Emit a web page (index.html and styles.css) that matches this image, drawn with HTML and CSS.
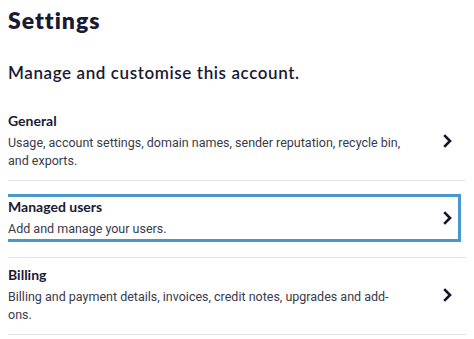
FILE: index.html
```html
<!DOCTYPE html>
<html>
<head>
    <title>Settings</title>
    <link rel="stylesheet" href="styles.css">
</head>
<body>
    <h1 class="page-title">Settings</h1>
    <h2 class="page-sub">Manage and customise this account.</h2>
    <section class="list">
        <a class="item" href="#general">
            <span class="text">
                <span class="name">General</span>
                <span class="desc">Usage, account settings, domain names, sender reputation, recycle bin, and exports.</span>
            </span>
            <span class="chev"><svg width="10" height="14" viewBox="0 0 10 14"><path d="M2.2 1.2 L8 7 L2.2 12.8" fill="none" stroke="#14142b" stroke-width="2.6"/></svg></span>
        </a>
        <a class="item focus" href="#users">
            <span class="ring">
                <span class="text">
                    <span class="name">Managed users</span>
                    <span class="desc">Add and manage your users.</span>
                </span>
                <span class="chev"><svg width="10" height="14" viewBox="0 0 10 14"><path d="M2.2 1.2 L8 7 L2.2 12.8" fill="none" stroke="#14142b" stroke-width="2.6"/></svg></span>
            </span>
        </a>
        <a class="item" href="#billing">
            <span class="text">
                <span class="name">Billing</span>
                <span class="desc">Billing and payment details, invoices, credit notes, upgrades and add-ons.</span>
            </span>
            <span class="chev"><svg width="10" height="14" viewBox="0 0 10 14"><path d="M2.2 1.2 L8 7 L2.2 12.8" fill="none" stroke="#14142b" stroke-width="2.6"/></svg></span>
        </a>
    </section>
</body>
</html>
```

FILE: styles.css
```css
body {
    margin: 8px;
    background-color: #ffffff;
    color: #1c1c36;
    font-family: Lato, "Noto Sans", sans-serif;
}
.page-title {
    margin: -2px 0 0;
    font-size: 23px;
    line-height: 28px;
    font-weight: 800;
    letter-spacing: 1px;
    color: #1a1a33;
}
.page-sub {
    margin: 0;
    padding-top: 28px;
    font-size: 17px;
    line-height: 22px;
    font-weight: 600;
    letter-spacing: 0.6px;
    color: #1a1a33;
}
.list {
    margin-top: 20px;
}
.item {
    display: flex;
    align-items: center;
    padding: 7px 0 10px;
    border-bottom: 1px solid #e4e4e8;
    text-decoration: none;
    color: inherit;
}
.item.focus {
    padding: 13px 5px 15px 0;
    margin-left: -5px;
}
.ring {
    flex: 1;
    display: flex;
    align-items: center;
    border: 3px solid #4a96cf;
    padding: 0 0 1px 2px;
}
.text {
    flex: 1;
    display: flex;
    flex-direction: column;
}
.name {
    font-size: 14px;
    line-height: 20px;
    font-weight: 700;
    color: #1a1a33;
}
.desc {
    max-width: 397px;
    margin-top: 3px;
    font-family: Roboto, "Noto Sans", sans-serif;
    font-size: 12.5px;
    line-height: 18px;
    color: #3a3a4a;
}
.chev {
    margin-left: auto;
    width: 38px;
    display: flex;
    justify-content: center;
}
.focus .chev {
    width: 22px;
}
```
